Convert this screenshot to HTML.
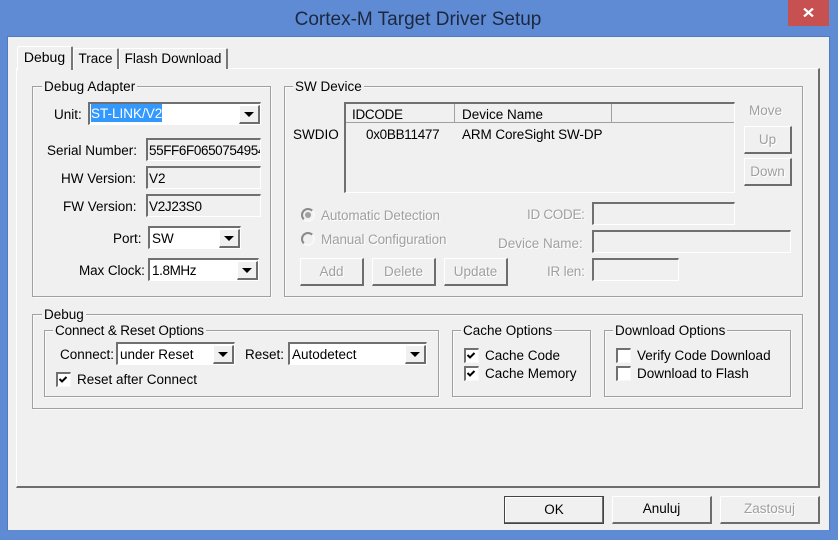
<!DOCTYPE html>
<html>
<head>
<meta charset="utf-8">
<style>
html,body{margin:0;padding:0;width:838px;height:540px;overflow:hidden;background:#5f8bd5;}
body{position:relative;font-family:"Liberation Sans",sans-serif;font-size:13.5px;color:#000;}
div{position:absolute;box-sizing:border-box;}
.t{white-space:nowrap;line-height:16px;height:16px;margin-top:1px;}
.d{color:#a0a0a0;text-shadow:1px 1px 0 #fff;}
.g{border:1px solid #a0a0a0;box-shadow:1px 1px 0 #fafafa inset,1px 1px 0 #fafafa;}
.l{background:#f0f0f0;padding:0 2px;white-space:nowrap;line-height:16px;height:16px;margin-top:1px;}
.s{border-style:solid;border-width:2px 1px 1px 2px;border-color:#707070 #fff #fff #707070;background:#f0f0f0;overflow:hidden;white-space:nowrap;line-height:21px;padding-left:1px;}
.w{background:#fff;line-height:22px;}
.a{width:21px;height:19px;background:#f0f0f0;border-style:solid;border-width:1px 2px 2px 1px;border-color:#fff #6d6d6d #6d6d6d #fff;}
.a:after{content:"";position:absolute;left:4px;top:6px;border-style:solid;border-width:5px 5px 0 5px;border-color:#000 transparent transparent transparent;}
.b{border-style:solid;border-width:1px 2px 2px 1px;border-color:#fff #6d6d6d #6d6d6d #fff;background:#f0f0f0;text-align:center;line-height:26px;}
.c{width:15px;height:15px;background:#fff;border-style:solid;border-width:2px 1px 1px 2px;border-color:#707070 #f8f8f8 #f8f8f8 #707070;}
.tab{background:#f0f0f0;border-style:solid;border-width:1px 2px 0 1px;border-color:#fff #777 #fff #fff;border-radius:2px 2px 0 0;text-align:center;white-space:nowrap;}
.r{width:14px;height:14px;border-radius:50%;border:2px solid;border-color:#8a8a8a #f8f8f8 #f8f8f8 #8a8a8a;background:#f0f0f0;}
</style>
</head>
<body>
<div style="left:0;top:0;width:838px;height:540px;background:#5f8bd5"></div>
<div class="t" style="left:0;top:8px;width:836px;height:22px;line-height:22px;text-align:center;font-size:19px;color:#1b2840">Cortex-M Target Driver Setup</div>
<div style="left:788px;top:0;width:41px;height:26px;background:#c75050"></div>
<svg style="position:absolute;left:803px;top:8px" width="11" height="9" viewBox="0 0 11 9"><path d="M1 0.5L10 8.5M10 0.5L1 8.5" stroke="#fff" stroke-width="2.2" fill="none"/></svg>
<div style="left:7px;top:36px;width:823px;height:495px;background:#f0f0f0;border:1px solid #4f7bc4;border-bottom-color:#5f8bd5"></div>

<!-- page -->
<div style="left:16px;top:68px;width:804px;height:420px;border-style:solid;border-width:1px 2px 2px 1px;border-color:#fff #6d6d6d #6d6d6d #fff;background:#f0f0f0"></div>
<div class="tab" style="left:73px;top:48px;width:46px;height:21px;line-height:20px">Trace</div>
<div class="tab" style="left:119px;top:48px;width:109px;height:21px;line-height:20px">Flash Download</div>
<div class="tab" style="left:17px;top:46px;width:56px;height:24px;line-height:21px;border-bottom:0;font-size:14px">Debug</div>

<!-- Debug Adapter -->
<div class="g" style="left:32px;top:86px;width:239px;height:211px"></div>
<div class="l" style="left:42px;top:78px;letter-spacing:.1px">Debug Adapter</div>
<div class="t" style="left:54px;top:106px">Unit:</div>
<div class="s w" style="left:88px;top:102px;width:173px;height:23px"></div>
<div class="t" style="left:91px;top:104px;margin-top:0;height:18px;line-height:20px;width:71px;background:#3399ff;color:#fff">ST-LINK/V2</div>
<div class="a" style="left:239px;top:105px"></div>
<div class="t" style="left:47px;top:142px">Serial Number:</div>
<div class="s" style="left:146px;top:138px;width:115px;height:23px;letter-spacing:-.4px">55FF6F0650754954</div>
<div class="t" style="left:61px;top:170px">HW Version:</div>
<div class="s" style="left:146px;top:166px;width:115px;height:23px">V2</div>
<div class="t" style="left:63px;top:198px">FW Version:</div>
<div class="s" style="left:146px;top:194px;width:115px;height:23px;letter-spacing:-.3px">V2J23S0</div>
<div class="t" style="left:113px;top:230px">Port:</div>
<div class="s w" style="left:148px;top:226px;width:93px;height:23px;padding-left:2px">SW</div>
<div class="a" style="left:219px;top:229px"></div>
<div class="t" style="left:79px;top:262px;letter-spacing:-.1px">Max Clock:</div>
<div class="s w" style="left:148px;top:258px;width:111px;height:23px;padding-left:2px;letter-spacing:-.4px">1.8MHz</div>
<div class="a" style="left:237px;top:261px"></div>

<!-- SW Device -->
<div class="g" style="left:284px;top:86px;width:519px;height:211px"></div>
<div class="l" style="left:293px;top:78px">SW Device</div>
<div class="t" style="left:293px;top:126px">SWDIO</div>
<div class="s" style="left:344px;top:102px;width:391px;height:91px"></div>
<div style="left:346px;top:122px;width:388px;height:1px;background:#a0a0a0"></div>
<div style="left:454px;top:104px;width:1px;height:18px;background:#a0a0a0"></div>
<div style="left:611px;top:104px;width:1px;height:18px;background:#a0a0a0"></div>
<div class="t" style="left:352px;top:106px;letter-spacing:-.3px">IDCODE</div>
<div class="t" style="left:462px;top:106px">Device Name</div>
<div class="t" style="left:366px;top:126px;letter-spacing:-.3px">0x0BB11477</div>
<div class="t" style="left:462px;top:126px;letter-spacing:-.1px">ARM CoreSight SW-DP</div>
<div class="t d" style="left:749px;top:102px">Move</div>
<div class="b d" style="left:744px;top:126px;width:48px;height:28px">Up</div>
<div class="b d" style="left:744px;top:158px;width:48px;height:28px">Down</div>

<div class="r" style="left:301px;top:208px"></div>
<div style="left:305px;top:212px;width:6px;height:6px;border-radius:50%;background:#a0a0a0"></div>
<div class="t d" style="left:321px;top:207px;letter-spacing:-.1px">Automatic Detection</div>
<div class="r" style="left:301px;top:232px"></div>
<div class="t d" style="left:321px;top:231px;letter-spacing:-.15px">Manual Configuration</div>
<div class="b d" style="left:300px;top:258px;width:64px;height:28px">Add</div>
<div class="b d" style="left:372px;top:258px;width:64px;height:28px">Delete</div>
<div class="b d" style="left:444px;top:258px;width:64px;height:28px">Update</div>
<div class="t d" style="left:527px;top:206px;letter-spacing:-.3px">ID CODE:</div>
<div class="s" style="left:592px;top:202px;width:143px;height:23px"></div>
<div class="t d" style="left:498px;top:235px">Device Name:</div>
<div class="s" style="left:592px;top:230px;width:199px;height:23px"></div>
<div class="t d" style="left:547px;top:263px;letter-spacing:-.2px">IR len:</div>
<div class="s" style="left:592px;top:258px;width:87px;height:23px"></div>

<!-- Debug -->
<div class="g" style="left:32px;top:314px;width:771px;height:95px"></div>
<div class="l" style="left:42px;top:306px">Debug</div>
<div class="g" style="left:44px;top:330px;width:395px;height:67px"></div>
<div class="l" style="left:53px;top:322px;letter-spacing:-.15px">Connect &amp; Reset Options</div>
<div class="t" style="left:60px;top:346px">Connect:</div>
<div class="s w" style="left:116px;top:342px;width:119px;height:23px;padding-left:2px">under Reset</div>
<div class="a" style="left:213px;top:345px"></div>
<div class="t" style="left:245px;top:346px">Reset:</div>
<div class="s w" style="left:288px;top:342px;width:139px;height:23px;padding-left:2px">Autodetect</div>
<div class="a" style="left:405px;top:345px"></div>
<div class="c" style="left:56px;top:372px"></div>
<svg style="position:absolute;left:56px;top:372px" width="15" height="15" viewBox="0 0 15 15"><path d="M3.5 7L6 9.5L10.5 5" stroke="#000" stroke-width="2" fill="none"/></svg>
<div class="t" style="left:77px;top:371px">Reset after Connect</div>

<div class="g" style="left:452px;top:330px;width:139px;height:67px"></div>
<div class="l" style="left:461px;top:322px">Cache Options</div>
<div class="c" style="left:464px;top:348px"></div>
<svg style="position:absolute;left:464px;top:348px" width="15" height="15" viewBox="0 0 15 15"><path d="M3.5 7L6 9.5L10.5 5" stroke="#000" stroke-width="2" fill="none"/></svg>
<div class="t" style="left:485px;top:347px">Cache Code</div>
<div class="c" style="left:464px;top:366px"></div>
<svg style="position:absolute;left:464px;top:366px" width="15" height="15" viewBox="0 0 15 15"><path d="M3.5 7L6 9.5L10.5 5" stroke="#000" stroke-width="2" fill="none"/></svg>
<div class="t" style="left:485px;top:365px">Cache Memory</div>

<div class="g" style="left:604px;top:330px;width:187px;height:67px"></div>
<div class="l" style="left:613px;top:322px">Download Options</div>
<div class="c" style="left:616px;top:348px"></div>
<div class="t" style="left:637px;top:347px">Verify Code Download</div>
<div class="c" style="left:616px;top:366px"></div>
<div class="t" style="left:637px;top:365px">Download to Flash</div>

<!-- Bottom buttons -->
<div class="b" style="left:504px;top:496px;width:100px;height:28px;border:1px solid #444;box-shadow:inset -1px -1px 0 #6d6d6d,inset 1px 1px 0 #fff;line-height:25px">OK</div>
<div class="b" style="left:612px;top:496px;width:100px;height:28px;line-height:24px">Anuluj</div>
<div class="b d" style="left:720px;top:496px;width:100px;height:28px;line-height:24px">Zastosuj</div>
</body>
</html>
